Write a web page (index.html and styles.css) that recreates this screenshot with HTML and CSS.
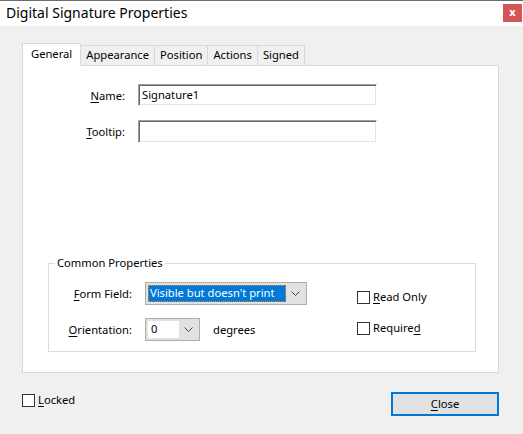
FILE: index.html
```html
<!DOCTYPE html>
<html>
<head>
<meta charset="utf-8">
<link rel="stylesheet" href="styles.css">
</head>
<body>
<div class="window">
  <div class="titlebar">
    <span class="title">Digital Signature Properties</span>
    <span class="close">x</span>
  </div>
  <div class="body">
    <div class="tabs">
      <div class="tab active">General</div>
      <div class="tab">Appearance</div>
      <div class="tab">Position</div>
      <div class="tab">Actions</div>
      <div class="tab">Signed</div>
    </div>
    <div class="panel">
      <div class="fields">
        <span class="lbl"><u>N</u>ame:</span>
        <div class="input">Signature1</div>
        <span class="lbl"><u>T</u>ooltip:</span>
        <div class="input"></div>
      </div>
      <fieldset class="group">
        <legend>Common Properties</legend>
        <div class="group-row">
          <div class="group-grid">
            <span class="lbl2"><u>F</u>orm Field:</span>
            <div class="select wide">
              <span class="sel-value">Visible but doesn't print</span>
              <span class="arrow"><svg width="9" height="5" viewBox="0 0 9 5"><path d="M0.5 0.5 L4.5 4.5 L8.5 0.5" fill="none" stroke="#444" stroke-width="1"/></svg></span>
            </div>
            <span class="lbl2"><u>O</u>rientation:</span>
            <div class="orient">
              <div class="select narrow">
                <span class="sel-value plain">0</span>
                <span class="arrow"><svg width="9" height="5" viewBox="0 0 9 5"><path d="M0.5 0.5 L4.5 4.5 L8.5 0.5" fill="none" stroke="#444" stroke-width="1"/></svg></span>
              </div>
              <span class="deg">degrees</span>
            </div>
          </div>
          <div class="checks">
            <label class="check"><span class="box"></span><span><u>R</u>ead Only</span></label>
            <label class="check"><span class="box"></span><span>Require<u>d</u></span></label>
          </div>
        </div>
      </fieldset>
    </div>
    <div class="footer">
      <label class="check"><span class="box"></span><span><u>L</u>ocked</span></label>
      <div class="btn"><u>C</u>lose</div>
    </div>
  </div>
</div>
</body>
</html>
```

FILE: styles.css
```css
* { box-sizing: border-box; }
html, body { margin: 0; padding: 0; }
body {
  width: 523px;
  height: 434px;
  overflow: hidden;
  font-family: "Noto Sans", "Open Sans", sans-serif;
  font-size: 11.2px;
  color: #000;
  background: #f0f0f0;
}
u { text-decoration: underline; text-underline-offset: 2px; }
.window {
  width: 523px;
  height: 434px;
  border-top: 1px solid #6e6e6e;
  display: flex;
  flex-direction: column;
}
.titlebar {
  height: 25px;
  background: #fff;
  display: flex;
  align-items: flex-start;
}
.title {
  font-size: 14px;
  line-height: 24px;
  padding-left: 6px;
}
.close {
  margin-left: auto;
  margin-top: 3px;
  margin-right: 1px;
  width: 19px;
  height: 18px;
  background: #d35555;
  color: #fff;
  font-weight: bold;
  font-size: 11px;
  line-height: 16px;
  text-align: center;
}
.body {
  flex: 1;
  background: #f0f0f0;
  padding: 17px 0 0 22px;
}
.tabs {
  display: flex;
  height: 22px;
  align-items: flex-start;
}
.tab {
  margin-top: 2px;
  height: 20px;
  line-height: 18px;
  padding: 0 5px;
  border: 1px solid #d9d9d9;
  border-bottom: none;
  border-left: none;
  background: #f0f0f0;
}
.tab.active {
  margin-top: 0;
  height: 23px;
  line-height: 20px;
  padding: 0 8px;
  border-left: 1px solid #d9d9d9;
  background: #fff;
  position: relative;
  z-index: 1;
}
.panel {
  width: 477px;
  height: 308px;
  background: #fff;
  border: 1px solid #d9d9d9;
  padding-top: 18px;
}
.fields {
  display: grid;
  grid-template-columns: 102px 239px;
  column-gap: 13px;
  row-gap: 14px;
  align-items: center;
}
.lbl, .lbl2 { text-align: right; }
.input {
  height: 22px;
  padding: 1px 3px;
  line-height: 18px;
  border: 1px solid;
  border-color: #a0a0a0 #fff #fff #a0a0a0;
  box-shadow: inset 1px 1px #696969, inset -1px -1px #e3e3e3;
}
.fields .input:last-child { height: 23px; }
.group {
  margin: 112px 0 0 25px;
  width: 428px;
  border: 1px solid #dcdcdc;
  padding: 11px 0 10px 0;
  min-width: 0;
}
.group legend {
  padding: 0 2px;
  margin-left: 6px;
  line-height: 16px;
}
.group-row {
  display: flex;
  align-items: flex-start;
}
.group-grid {
  display: grid;
  grid-template-columns: 83px auto;
  column-gap: 13px;
  row-gap: 13px;
  align-items: center;
}
.select {
  height: 23px;
  border: 1px solid #adadad;
  background: #e1e1e1;
  display: flex;
  align-items: stretch;
  padding: 2px;
}
.select.wide { width: 162px; }
.select.narrow { width: 55px; }
.sel-value {
  flex: 1;
  background: #0078d7;
  color: #fff;
  line-height: 16px;
  padding: 0 2px;
  outline: 1px dotted #e98b2a;
  outline-offset: -1px;
  white-space: nowrap;
  overflow: hidden;
}
.sel-value.plain {
  background: #fff;
  color: #000;
  outline: none;
  padding-left: 3px;
}
.arrow {
  width: 18px;
  display: flex;
  align-items: center;
  justify-content: center;
}
.orient {
  display: flex;
  align-items: center;
}
.deg { margin-left: 13px; }
.checks {
  margin-left: 50px;
  margin-top: 7px;
  display: flex;
  flex-direction: column;
  gap: 15px;
}
.check {
  display: flex;
  align-items: center;
  line-height: 16px;
}
.box {
  width: 13px;
  height: 13px;
  border: 1px solid #333;
  background: #fff;
  margin-right: 3px;
}
.footer {
  display: flex;
  justify-content: space-between;
  align-items: flex-start;
  margin-top: 19px;
  padding-right: 24px;
}
.btn {
  width: 108px;
  height: 24px;
  border: 2px solid #0078d7;
  background: #e1e1e1;
  text-align: center;
  line-height: 19px;
}
```
